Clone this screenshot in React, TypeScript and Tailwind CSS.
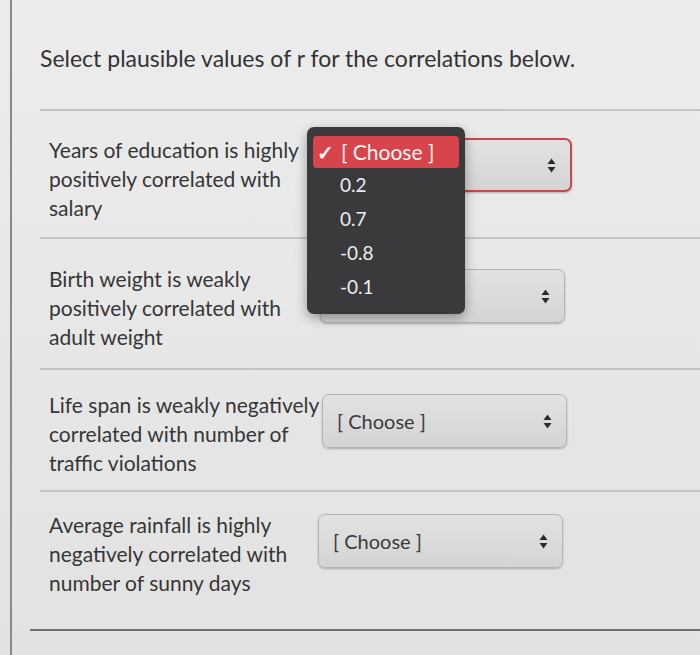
import React from "react";

// Matching question: pick a plausible r for each described correlation.
// First select is open (native-looking dark macOS popup).

const OPTIONS = ["0.2", "0.7", "-0.8", "-0.1"];

const ROWS = [
  {
    text: ["Years of education is highly", "positively correlated with", "salary"],
    row: "h-[126px] pt-[24px] relative z-10",
    selPad: "pt-[3px] pl-[-6px] -ml-[6px]",
    open: true,
  },
  {
    text: ["Birth weight is weakly", "positively correlated with", "adult weight"],
    row: "h-[129px] pt-[25px]",
    selPad: "pt-[5px] pl-[4px]",
    open: false,
  },
  {
    text: ["Life span is weakly negatively", "correlated with number of", "traffic violations"],
    row: "h-[120px] pt-[20px]",
    selPad: "pt-[4px] pl-[6px]",
    open: false,
  },
  {
    text: ["Average rainfall is highly", "negatively correlated with", "number of sunny days"],
    row: "h-[137px] pt-[18px]",
    selPad: "pt-[4px] pl-[2px]",
    open: false,
  },
];

function Arrows() {
  return (
    <svg width="9" height="15" viewBox="0 0 9 15" className="shrink-0">
      <path d="M4.5 0.5 L8.5 6 H0.5 Z" fill="#2b2b2b" />
      <path d="M4.5 14.5 L8.5 9 H0.5 Z" fill="#2b2b2b" />
    </svg>
  );
}

function Select({ open }: { open: boolean }) {
  return (
    <div className="relative">
      <div
        className={`flex items-center justify-between h-[54px] rounded-[7px] pl-[14px] pr-[14px] bg-gradient-to-b from-[#e2e2e2] to-[#d4d4d4] shadow-[0_1px_2px_rgba(0,0,0,0.25)] ${
          open ? "w-[262px] border-2 border-[#c9464c]" : "w-[245px] border border-[#b5b5b5]"
        }`}
      >
        <span className="text-[20px] text-[#3a3a3a]">{open ? "" : "[ Choose ]"}</span>
        <Arrows />
      </div>
      {open && (
        <div className="absolute left-[-3px] top-[-11px] w-[158px] rounded-[7px] bg-[#3a3a3c] px-[6px] pt-[9px] pb-[10px] shadow-[0_4px_12px_rgba(0,0,0,0.35)]">
          <div className="flex items-center h-[32px] rounded-[4px] bg-[#d8444b] pl-[4px] text-[#f6f6f6]">
            <span className="w-[24px] text-[20px] font-bold leading-none">✓</span>
            <span className="text-[21px]">[ Choose ]</span>
          </div>
          {OPTIONS.map((o) => (
            <div key={o} className="h-[34px] flex items-center pl-[27px] text-[19px] text-[#ededed]">
              {o}
            </div>
          ))}
        </div>
      )}
    </div>
  );
}

export default function App() {
  return (
    <div
      className="min-h-[655px] bg-gradient-to-b from-[#ececec] to-[#e2e2e2] pl-[10px] text-[#363636]"
      style={{ fontFamily: "Lato, 'Open Sans', sans-serif" }}
    >
      <div className="min-h-[655px] border-l-2 border-[#8a8a8a] pl-[28px]">
        <h1 className="pt-[43px] text-[23px] leading-[30px] text-[#333333]">
          Select plausible values of r for the correlations below.
        </h1>
        <div className="mt-[36px] border-t-2 border-[#c4c4c4]" />
        {ROWS.map((r, i) => (
          <div key={i}>
            <div className={`flex ${r.row}`}>
              <div className="w-[276px] pl-[9px]">
                {r.text.map((t) => (
                  <div key={t} className="text-[21px] leading-[29px] whitespace-nowrap">
                    {t}
                  </div>
                ))}
              </div>
              <div className={r.selPad}>
                <Select open={r.open} />
              </div>
            </div>
            <div
              className={`border-t-2 ${
                i === ROWS.length - 1 ? "border-[#6f6f6f] -ml-[10px]" : "border-[#c4c4c4]"
              }`}
            />
          </div>
        ))}
      </div>
    </div>
  );
}
